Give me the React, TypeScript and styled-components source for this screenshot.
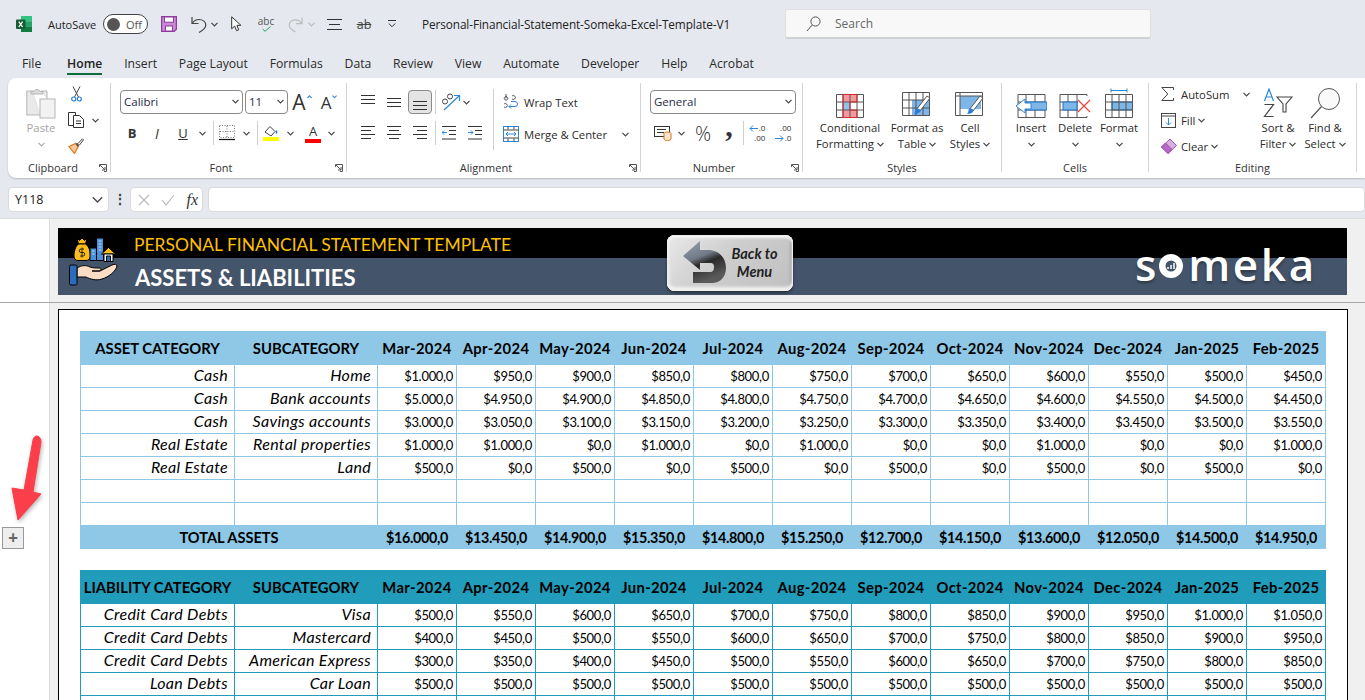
import React from "react";
import styled, { createGlobalStyle } from "styled-components";

const UI = "'Open Sans', 'Noto Sans', sans-serif";
const CELL = "Lato, 'Liberation Sans', sans-serif";

const Global = createGlobalStyle`
  html, body { margin: 0; padding: 0; background: #e5e8ee; }
  body { font-family: ${UI}; color: #222; }
`;

const Page = styled.div`
  width: 1365px;
  height: 700px;
  overflow: hidden;
  position: relative;
  background: #e5e8ee;
  display: flex;
  flex-direction: column;
`;

/* ---------- shared bits ---------- */

const Tool = styled.span<{ $w: number; $ml?: number; $down?: boolean }>`
  flex: none;
  display: inline-flex;
  align-items: center;
  justify-content: center;
  width: ${({ $w }) => $w}px;
  height: 24px;
  margin-left: ${({ $ml }) => $ml ?? 0}px;
  box-sizing: border-box;
  ${({ $down }) => ($down ? "background: #e4e4e4; border: 1px solid #8a8a8a; border-radius: 4px;" : "")}
`;

const VSep = styled.span<{ $ml: number; $h?: number }>`
  flex: none;
  width: 1px;
  height: ${({ $h }) => $h ?? 24}px;
  margin-left: ${({ $ml }) => $ml}px;
  background: #cfcfcf;
`;

const Chev = ({ c = "#444", w = 7 }: { c?: string; w?: number }) => (
  <svg width={w} height={(w * 5) / 7} viewBox="0 0 7 5" fill="none">
    <path d="M.5 .8 3.5 3.8 6.500 .8" stroke={c} strokeWidth={7 / w + 0.2} />
  </svg>
);

/* ---------- title bar ---------- */

const TitleBar = styled.div`
  height: 48px;
  display: flex;
  align-items: center;
  padding-left: 16px;
  font-size: 11.5px;
  color: #222;
`;

const Toggle = styled.span`
  flex: none;
  margin-left: 7px;
  width: 45px;
  height: 20px;
  box-sizing: border-box;
  border: 1px solid #444;
  border-radius: 10px;
  background: #fff;
  display: flex;
  align-items: center;
  padding: 0 5px 0 3px;
  justify-content: space-between;
  font-size: 11px;
  color: #555;
  &::before {
    content: "";
    width: 13px;
    height: 13px;
    border-radius: 50%;
    background: #555;
  }
`;

const AutoSaveText = styled.span`
  flex: none;
  width: 48px;
  margin-left: 16px;
  white-space: nowrap;
  font-size: 11px;
`;

const FileName = styled.span`
  flex: none;
  width: 340px;
  margin-left: 26px;
  white-space: nowrap;
  font-size: 11.8px;
  letter-spacing: -0.1px;
`;

const SearchBox = styled.div`
  flex: none;
  width: 366px;
  height: 30px;
  margin-left: 23px;
  box-sizing: border-box;
  background: #f8f8f8;
  border: 1px solid #e0e0e0;
  border-bottom: 2px solid #cfd1d4;
  border-radius: 3px;
  display: flex;
  align-items: center;
  gap: 14px;
  padding-left: 20px;
  font-size: 12px;
  color: #666;
`;

const AbcText = styled.span`
  display: flex;
  flex-direction: column;
  align-items: center;
  font-size: 10px;
  line-height: 10px;
  color: #555;
`;

const StruckText = styled.span`
  font-size: 12.5px;
  color: #444;
  text-decoration: line-through;
`;

const ExcelIcon = () => (
  <svg width="16" height="16" viewBox="0 0 16 16">
    <rect x="5" y="0" width="11" height="5.4" fill="#33c481" />
    <rect x="5" y="5.3" width="11" height="5.4" fill="#21a366" />
    <rect x="5" y="10.6" width="11" height="5.4" fill="#107c41" />
    <rect x="0" y="3.5" width="9.5" height="9.5" rx="1" fill="#185c37" />
    <path d="M2.8 5.6 6.6 11M6.6 5.6 2.8 11" stroke="#fff" strokeWidth="1.3" />
  </svg>
);

const SaveIcon = () => (
  <svg width="16" height="16" viewBox="0 0 16 16">
    <path d="M.6.6h14.8v12.6l-2.2 2.2H.6z" fill="#c98ad3" stroke="#8e3b9b" strokeWidth="1.2" />
    <rect x="3.5" y="1" width="9" height="5.2" fill="#fff" stroke="#8e3b9b" />
    <rect x="4.5" y="10" width="7" height="5" fill="#fff" stroke="#8e3b9b" />
  </svg>
);

const UndoIcon = ({ c = "#444" }: { c?: string }) => (
  <svg width="16" height="17" viewBox="0 0 16 17" fill="none" stroke={c} strokeWidth="1.2">
    <path d="M1 1v6.5h6.5" />
    <path d="M1.3 7.3C3 4.5 5 3.5 8 3.5c4 0 6.8 2.5 6.8 5.5 0 2.5-1.5 4.5-6.8 7.5" />
  </svg>
);

const RedoIcon = () => (
  <svg width="15" height="17" viewBox="0 0 16 17" fill="none" stroke="#bbb" strokeWidth="1.2">
    <path d="M15 1v6.5H8.5" />
    <path d="M14.7 7.3C13 4.5 11 3.5 8 3.5 4 3.5 1.2 6 1.2 9c0 2.5 1.5 4.5 6.8 7.5" />
  </svg>
);

const CursorIcon = () => (
  <svg width="11" height="16" viewBox="0 0 11 16" fill="#fff" stroke="#333" strokeWidth="1">
    <path d="M.7.8v12l3-2.7 1.8 4.6 2.2-.9-1.8-4.5h4z" />
  </svg>
);

const GreenCheck = () => (
  <svg width="9" height="6" viewBox="0 0 9 6" fill="none">
    <path d="M.6 3 3 5.3 8.4.6" stroke="#2a9d5c" strokeWidth="1" />
  </svg>
);

const CustomizeIcon = () => (
  <svg width="8" height="8" viewBox="0 0 8 8" fill="none" stroke="#333">
    <path d="M0 .5h8M.8 3.500 4 6.700 7.200 3.500" />
  </svg>
);

const Lines = ({ w, ys, ws, align = "l" }: { w: number; ys: number[]; ws?: number[]; align?: "l" | "c" | "r" }) => (
  <svg width={w} height="16" viewBox={`0 0 ${w} 16`} stroke="#333" strokeWidth="1">
    {ys.map((y, i) => {
      const len = ws ? ws[i] : w;
      const x = align === "l" ? 0 : align === "c" ? (w - len) / 2 : w - len;
      return <line key={i} x1={x} x2={x + len} y1={y + 0.5} y2={y + 0.5} />;
    })}
  </svg>
);

const SearchGlass = () => (
  <svg width="15" height="16" viewBox="0 0 15 16" fill="none" stroke="#555" strokeWidth="1">
    <circle cx="9.5" cy="5.5" r="4.6" />
    <path d="M6.2 9 1 15" />
  </svg>
);

/* ---------- tabs ---------- */

const TabBar = styled.div`
  height: 30px;
  display: flex;
  align-items: flex-start;
  padding-left: 22px;
  gap: 21.8px;
  font-size: 12.2px;
`;

const Tab = styled.span<{ $on?: boolean }>`
  height: 27px;
  box-sizing: border-box;
  padding-top: 7px;
  line-height: 18px;
  white-space: nowrap;
  color: #2b2b2b;
  ${({ $on }) => ($on ? "margin-left: 4px; font-weight: 600; color: #222; border-bottom: 2px solid #0e6b3a;" : "")}
`;

/* ---------- ribbon ---------- */

const Ribbon = styled.div`
  height: 100px;
  margin-left: 8px;
  background: #fff;
  border-radius: 8px 0 0 8px;
  box-shadow: 0 1px 2px rgba(0, 0, 0, 0.2);
  display: flex;
  align-items: flex-start;
  font-size: 11.3px;
  color: #2b2b2b;
`;

const Group = styled.section<{ $w: number; $pl: number }>`
  position: relative;
  flex: none;
  width: ${({ $w }) => $w}px;
  height: 89px;
  box-sizing: border-box;
  margin-top: 5px;
  padding: 3px 0 0 ${({ $pl }) => $pl}px;
  border-right: 1px solid #d4d4d4;
`;

const GroupBody = styled.div`
  height: 74px;
  display: flex;
  align-items: flex-start;
`;

const GroupLabel = styled.div`
  position: absolute;
  left: 0;
  right: 0;
  bottom: -4px;
  text-align: center;
  font-size: 11px;
  line-height: 16px;
  color: #333;
`;

const LaunchLabel = styled(GroupLabel)`
  padding-right: 15px;
`;

const ClipLabel = styled(GroupLabel)`
  text-align: left;
  padding-left: 20px;
`;

const Launcher = styled.span`
  position: absolute;
  right: 3px;
  bottom: 0;
  display: flex;
`;

const Stack = styled.div<{ $w?: number }>`
  ${({ $w }) => ($w ? `width: ${$w}px;` : "")}
  flex: none;
  padding-top: 4px;
  display: flex;
  flex-direction: column;
  gap: 7px;
`;

const Row = styled.div`
  height: 24px;
  display: flex;
  align-items: center;
`;

const SmallStack = styled.div<{ $w: number; $ml?: number }>`
  flex: none;
  width: ${({ $w }) => $w}px;
  margin-left: ${({ $ml }) => $ml ?? 0}px;
  display: flex;
  flex-direction: column;
  gap: 10px;
`;

const SmallRow = styled.div`
  height: 16px;
  display: flex;
  align-items: center;
  white-space: nowrap;
`;

const SmallIcon = styled.span<{ $w: number; $start?: boolean }>`
  flex: none;
  display: inline-flex;
  justify-content: ${({ $start }) => ($start ? "flex-start" : "center")};
  width: ${({ $w }) => $w}px;
`;

const Select = styled.div<{ $w: number; $ml?: number }>`
  flex: none;
  width: ${({ $w }) => $w}px;
  height: 24px;
  margin-left: ${({ $ml }) => $ml ?? 0}px;
  box-sizing: border-box;
  border: 1px solid #8a8a8a;
  border-radius: 4px;
  display: flex;
  align-items: center;
  justify-content: space-between;
  padding: 0 3px 2px;
  font-size: 11.5px;
  color: #1f2a44;
`;

const LargeBtn = styled.div<{ $w: number; $ml?: number; $faint?: boolean }>`
  flex: none;
  width: ${({ $w }) => $w}px;
  margin-left: ${({ $ml }) => $ml ?? 0}px;
  display: flex;
  flex-direction: column;
  align-items: center;
  text-align: center;
  line-height: 16px;
  white-space: nowrap;
  color: ${({ $faint }) => ($faint ? "#a5a5a5" : "#2b2b2b")};
`;

const IconSlot = styled.div`
  height: 34px;
  display: flex;
  align-items: center;
  justify-content: center;
`;

const Line2 = styled.span`
  display: inline-flex;
  align-items: center;
  gap: 3px;
  height: 16px;
`;

const TallSep = styled.span`
  flex: none;
  width: 1px;
  height: 61px;
  margin-top: 3px;
  background: #cfcfcf;
`;

const WrapStack = styled.div`
  flex: none;
  padding: 5px 0 0 9px;
  display: flex;
  flex-direction: column;
  gap: 10px;
`;

const WrapRow = styled.div`
  height: 22px;
  display: flex;
  align-items: center;
  gap: 5px;
  white-space: nowrap;
`;

const FontA = styled.span<{ $size: number }>`
  font-size: ${({ $size }) => $size}px;
  line-height: 1;
  color: #333;
`;

const Caret = styled.span`
  display: flex;
  margin: -10px 0 0 1px;
`;

const CaretUp = styled(Caret)`
  transform: rotate(180deg);
`;

const Bold = styled.span`
  font-weight: 700;
  font-size: 13px;
  color: #333;
`;

const Ital = styled.span`
  font-style: italic;
  font-size: 14px;
  color: #333;
`;

const Under = styled.span`
  text-decoration: underline;
  font-size: 13px;
  color: #333;
`;

const ColorA = styled.span<{ $bar: string }>`
  width: 16px;
  text-align: center;
  font-size: 13px;
  line-height: 15px;
  border-bottom: 4px solid ${({ $bar }) => $bar};
  color: #333;
`;

const Percent = styled.span`
  font-size: 20px;
  font-weight: 300;
  color: #333;
`;

const Comma = styled.span`
  font-family: 'Liberation Serif', serif;
  font-weight: 700;
  font-size: 30px;
  line-height: 10px;
  margin-top: -15px;
  color: #333;
`;

const DecimalPair = styled.span`
  display: flex;
  flex-direction: column;
  font-size: 8px;
  line-height: 10px;
  color: #333;
`;

const DecimalRow = styled.span`
  display: flex;
  align-items: center;
  justify-content: flex-end;
  gap: 1px;
`;

const ArrowLeft = () => (
  <svg width="9" height="7" viewBox="0 0 9 7" fill="none" stroke="#2b88d8"><path d="M9 3.500H1M4 .5l-3 3 3 3" /></svg>
);

const ArrowRight = () => (
  <svg width="9" height="7" viewBox="0 0 9 7" fill="none" stroke="#2b88d8"><path d="M0 3.500h8M5 .5l3 3-3 3" /></svg>
);

const Launch = () => (
  <svg width="8" height="8" viewBox="0 0 8 8" fill="none" stroke="#555" strokeWidth="1">
    <path d="M.5 3V.5h7v7H5" />
    <path d="M1 1l5 5M3 6h3V3" />
  </svg>
);

const PasteIcon = () => (
  <svg width="30" height="31" viewBox="0 0 30 31" fill="none" stroke="#b5b5b5" strokeWidth="1">
    <path d="M7 3H.8v24H15" fill="#e9e9e9" />
    <path d="M15 3h6v8" fill="#e9e9e9" />
    <path d="M5 6V3.5h3C8 1 14 1 14 3.5h3V6z" fill="#ddd" />
    <rect x="14" y="11" width="15" height="19" fill="#f2f2f2" />
  </svg>
);

const CutIcon = () => (
  <svg width="11" height="16" viewBox="0 0 11 16" fill="none">
    <path d="M2 .5 7.5 11M9 .5 3.5 11" stroke="#444" strokeWidth="1" />
    <circle cx="2.7" cy="13" r="2" stroke="#2b7cd3" strokeWidth="1.2" />
    <circle cx="8.3" cy="13" r="2" stroke="#2b7cd3" strokeWidth="1.2" />
  </svg>
);

const CopyIcon = () => (
  <svg width="16" height="16" viewBox="0 0 16 16" fill="#fff" stroke="#333" strokeWidth="1">
    <path d="M.5.5h7v13h-7z" />
    <path d="M5.5 3.5h6l4 4v8h-10z" />
    <path d="M8 9h5M8 11.500h5" />
  </svg>
);

const BrushIcon = () => (
  <svg width="16" height="16" viewBox="0 0 16 16" fill="none">
    <path d="M1 8.500 7.500 5.500 10 9l-3.500 6.500z" fill="#f6c89a" stroke="#d9771c" strokeWidth="1.2" />
    <path d="M7.500 5.500 9 7.500 10 9l1.500-1.500-2-2.500z" fill="#555" />
    <path d="M10 5.500 14.500.8l1 1-4 5.200" stroke="#444" strokeWidth="1" />
  </svg>
);

const BorderIcon = () => (
  <svg width="16" height="16" viewBox="0 0 16 16" fill="none">
    <rect x=".5" y=".5" width="15" height="12" stroke="#777" strokeDasharray="1 1.500" />
    <path d="M8 1v12M1 6.500h14" stroke="#777" strokeDasharray="1 1.500" />
    <path d="M0 14.500h16" stroke="#111" strokeWidth="1.200" />
  </svg>
);

const FillIcon = () => (
  <svg width="16" height="16" viewBox="0 0 16 16" fill="none">
    <path d="M2 7 7 1.500l5 5L8 11z" fill="#fff" stroke="#444" />
    <path d="M13.500 5.500v3" stroke="#2b7cd3" strokeWidth="1.600" />
    <rect x="0" y="12" width="16" height="4" fill="#ffff00" />
  </svg>
);

const OrientIcon = () => (
  <svg width="20" height="18" viewBox="0 0 20 18" fill="none">
    <path d="M3 17 18 3M13 2.500h5.500V8" stroke="#2b88d8" strokeWidth="1.200" />
    <circle cx="4" cy="8.500" r="2.500" stroke="#444" />
    <circle cx="9" cy="3.500" r="2.500" stroke="#444" />
  </svg>
);

const IndentIcon = ({ flip }: { flip?: boolean }) => (
  <svg width="14" height="14" viewBox="0 0 14 14" fill="none">
    <path d="M0 .5h14M7 4.500h7M7 8.500h7M0 13h14" stroke="#333" />
    <path d={flip ? "M0 6.500h5M3 4.500l2 2-2 2" : "M0 6.500h5M2 4.500l-2 2 2 2"} stroke="#2b88d8" />
  </svg>
);

const WrapIcon = () => (
  <svg width="16" height="18" viewBox="0 0 16 18" fill="none">
    <path d="M6 13.500h6a2.500 2.500 0 0 0 0-5H8M8 11.500l-2 2 2 2" stroke="#2b88d8" strokeWidth="1" />
    <path d="M3 5.500V1M3 3.500a1.800 1.800 0 1 0 .1 0M9 3a2 2 0 1 1 0 3M1 11a2 2 0 1 1 0 3" stroke="#444" strokeWidth=".9" />
  </svg>
);

const MergeIcon = () => (
  <svg width="16" height="16" viewBox="0 0 16 16" fill="none">
    <rect x=".5" y=".5" width="15" height="15" stroke="#2b88d8" />
    <path d="M5 .5v3M11 .5v3M5 12.500v3M11 12.500v3M.5 4h15M.5 12h15" stroke="#444" />
    <path d="M3 8h10M5 6 3 8l2 2M11 6l2 2-2 2" stroke="#2b88d8" />
  </svg>
);

const CurrencyIcon = () => (
  <svg width="18" height="15" viewBox="0 0 18 15" fill="none">
    <rect x=".5" y=".5" width="15" height="10" fill="#fff" stroke="#333" />
    <path d="M3 3.500h9M3 6.500h7" stroke="#333" />
    <ellipse cx="13.500" cy="7.500" rx="3.500" ry="1.500" fill="#f6e3d0" stroke="#d9771c" />
    <path d="M10 7.500v5.500c0 2 7 2 7 0V7.500" fill="#f6e3d0" stroke="#d9771c" />
  </svg>
);

const Grid = ({ w = 28, h = 24, children }: { w?: number; h?: number; children?: React.ReactNode }) => (
  <svg width={w} height={h + 6} viewBox={`0 -6 ${w} ${h + 6}`} fill="none">
    {children}
  </svg>
);

const gridLines = "M.5.500h27v23H.5zM.5 8h27M.5 16h27M7 .5v23M14 .5v23M21 .5v23";

const CondIcon = () => (
  <Grid>
    <rect x="7" y="0" width="14" height="8" fill="#f4979e" />
    <rect x="7" y="8" width="7" height="8" fill="#8ec3ea" />
    <rect x="7" y="16" width="14" height="8" fill="#f4979e" />
    <path d={gridLines} stroke="#555" />
    <path d="M7 .5h14v7.500H14v8h7v7.500H7z" stroke="#d62b2b" />
  </Grid>
);

const Brush = ({ x, y }: { x: number; y: number }) => (
  <g transform={`translate(${x} ${y})`}>
    <path d="M2 16 13 2l3 2L6 17z" fill="#fff" stroke="#555" />
    <path d="M0 20c3 0 6-1 7-4l-4-2c-2 1-1 4-3 6z" fill="#2b7cd3" />
  </g>
);

const TableStyleIcon = () => (
  <svg width="30" height="30" viewBox="0 -4 30 30" fill="none">
    <rect x="10" y="8" width="18" height="16" fill="#7fb6e8" />
    <path d={gridLines} stroke="#555" />
    <Brush x={12} y={2} />
  </svg>
);

const CellStyleIcon = () => (
  <svg width="30" height="30" viewBox="0 -4 30 30" fill="none">
    <rect x="5" y="4" width="21" height="13" fill="#7fb6e8" />
    <path d="M.5.500h27v23H.5zM.5 4h27M5 .5v23" stroke="#555" />
    <Brush x={12} y={2} />
  </svg>
);

const InsertIcon = () => (
  <svg width="32" height="30" viewBox="0 -6 32 30" fill="none">
    <path d="M3 .5h27v23H3zM3 8h27M3 16h27M11 .5v23M20 .5v23" stroke="#555" />
    <rect x="11" y="8" width="21" height="8" fill="#7fb6e8" stroke="#1a73c7" />
    <path d="M10 5 1 12l9 7v-4h6V9h-6z" fill="#fff" stroke="#2b88d8" />
  </svg>
);

const DeleteIcon = () => (
  <svg width="32" height="30" viewBox="0 -6 32 30" fill="none">
    <path d="M1 .5h27v23H1zM1 8h27M1 16h27M9 .5v23M18 .5v23" stroke="#555" />
    <rect x="4" y="8" width="14" height="8" fill="#7fb6e8" stroke="#1a73c7" />
    <rect x="19" y="2" width="12" height="20" fill="#fff" />
    <path d="M19 6l12 12M31 6 19 18" stroke="#f0423c" strokeWidth="1.200" />
  </svg>
);

const FormatIcon = () => (
  <svg width="28" height="30" viewBox="0 -6 28 30" fill="none">
    <rect x="7" y="8" width="21" height="8" fill="#7fb6e8" stroke="#1a73c7" />
    <path d={gridLines} stroke="#555" />
    <path d="M6-3.500h16M6-5.500v4M22-5.500v4" stroke="#2b88d8" />
  </svg>
);

const SigmaIcon = () => (
  <svg width="13" height="14" viewBox="0 0 13 14" fill="none" stroke="#444" strokeWidth="1">
    <path d="M12.500 3V.5H.8l6 6.500-6 6.500h11.700V11" />
  </svg>
);

const FillDown = () => (
  <svg width="15" height="15" viewBox="0 0 15 15" fill="none">
    <rect x=".5" y=".5" width="14" height="14" stroke="#444" />
    <path d="M.5 3h14" stroke="#444" />
    <path d="M7.500 5v7M5 9.500l2.500 2.500L10 9.500" stroke="#2b88d8" />
  </svg>
);

const Eraser = () => (
  <svg width="16" height="16" viewBox="0 0 16 16">
    <path d="M9 1l6.500 6.500L7 15.500.5 9z" fill="#d9b3e0" stroke="#9c4fb0" />
    <path d="M.5 9 4.500 5 11 11.500 7 15.500z" fill="#b668c7" stroke="#9c4fb0" />
  </svg>
);

const SortIcon = () => (
  <svg width="30" height="30" viewBox="0 0 30 30" fill="none">
    <path d="M1.500 13 6 1l4.500 12M3 9h6" stroke="#2b88d8" strokeWidth="1.200" />
    <path d="M1.500 16.500h9l-9 12h9" stroke="#444" strokeWidth="1.200" />
    <path d="M14 9h15l-6 7v8h-3v-8z" stroke="#444" strokeWidth="1.100" />
  </svg>
);

const FindIcon = () => (
  <svg width="30" height="31" viewBox="0 0 30 31" fill="none">
    <circle cx="19" cy="11" r="10.500" fill="#fafafa" stroke="#555" />
    <path d="M11.500 18.500 1 30" stroke="#555" strokeWidth="1.200" />
  </svg>
);

/* ---------- formula bar ---------- */

const FormulaBar = styled.div`
  height: 41px;
  box-sizing: border-box;
  padding: 9px 0 0 8px;
  display: flex;
  align-items: flex-start;
  border-bottom: 1px solid #dcdcdc;
`;

const FBox = styled.div<{ $w?: number }>`
  ${({ $w }) => ($w ? `width: ${$w}px; flex: none;` : "flex: 1;")}
  height: 25px;
  box-sizing: border-box;
  background: #fff;
  border: 1px solid #dadada;
  border-radius: 4px;
  display: flex;
  align-items: center;
  font-size: 12.5px;
  color: #222;
`;

const NameBox = styled(FBox)`
  justify-content: space-between;
  padding: 0 5px 0 6px;
`;

const FxBox = styled(FBox)`
  justify-content: space-between;
  padding: 0 4px 0 7px;
  margin-right: 5px;
`;

const Dots = styled.span`
  width: 21px;
  flex: none;
  text-align: center;
  font-weight: 700;
  line-height: 24px;
  font-size: 14px;
  color: #444;
`;

const Fx = styled.span`
  font-family: 'Liberation Serif', serif;
  font-style: italic;
  font-size: 16px;
  color: #333;
`;

/* ---------- sheet ---------- */

const Frozen = styled.div`
  height: 84px;
  flex: none;
  box-sizing: border-box;
  display: flex;
  border-bottom: 1px solid #a6a6a6;
`;

const Gutter = styled.div`
  flex: none;
  width: 49px;
  background: #fff;
  border-right: 1px solid #dcdcdc;
`;

const FrozenPane = styled.div`
  flex: 1;
  background: #f0f0f0;
  padding: 9px 0 0 8px;
`;

const Banner = styled.div`
  position: relative;
  width: 1289px;
  height: 67px;
  display: grid;
  grid-template-rows: 30px 37px;
  background: #44546a;
`;

const BannerTop = styled.div`
  background: #000;
  padding-left: 76px;
  font-family: ${CELL};
  font-size: 17.45px;
  line-height: 33px;
  color: #ffc000;
  white-space: nowrap;
`;

const BannerTitle = styled.div`
  padding-left: 77px;
  font-family: ${CELL};
  font-weight: 700;
  font-size: 22px;
  line-height: 40px;
  color: #fff;
  white-space: nowrap;
`;

const LogoSpot = styled.span`
  position: absolute;
  left: 10px;
  top: 9px;
  display: flex;
`;

const BackButton = styled.div`
  position: absolute;
  left: 609px;
  top: 7px;
  width: 126px;
  height: 56px;
  box-sizing: border-box;
  border-radius: 8px;
  padding-left: 15px;
  display: flex;
  align-items: center;
  background: linear-gradient(135deg, #e9e9e9 0%, #cdcdcd 45%, #c0c0c0 100%);
  box-shadow: inset 0 0 0 1px #eee, inset 0 3px 3px #f6f6f6, inset 0 -4px 3px #f2f2f2,
    inset 3px 0 3px #e8e8e8, inset -3px 0 3px #a9a9a9, 0 2px 3px rgba(0, 0, 0, 0.45);
`;

const BackText = styled.span`
  flex: 1;
  text-align: center;
  font-family: ${CELL};
  font-style: italic;
  font-weight: 700;
  font-size: 14.5px;
  line-height: 18px;
  color: #222;
  padding: 0 12px 0 0;
`;

const Someka = styled.div`
  position: absolute;
  left: 1077px;
  top: 12px;
  display: flex;
  align-items: baseline;
  font-family: ${UI};
  font-weight: 600;
  font-size: 44px;
  line-height: 48px;
  letter-spacing: 2.7px;
  color: #fff;
  text-shadow: 0 2px 3px rgba(0, 0, 0, 0.35);
`;

const SomekaDisc = styled.span`
  align-self: flex-end;
  margin: 0 5px 10px 0;
  display: flex;
`;

const Work = styled.div`
  flex: 1;
  display: flex;
  min-height: 0;
`;

const PlusCol = styled(Gutter)`
  padding: 224px 0 0 2px;
  box-sizing: content-box;
  width: 47px;
`;

const PlusBtn = styled.div`
  width: 22px;
  height: 22px;
  box-sizing: border-box;
  border: 1px solid #999;
  background: #eee;
  text-align: center;
  font-size: 17px;
  font-weight: 700;
  line-height: 19px;
  color: #666;
`;

const ArrowSpot = styled.span`
  position: absolute;
  left: 8px;
  top: 432px;
  display: flex;
  filter: drop-shadow(1px 2px 2px rgba(0, 0, 0, 0.3));
`;

const WorkPane = styled.div`
  flex: 1;
  background: #f0f0f0;
  padding: 6px 0 0 8px;
`;

const SheetFrame = styled.div`
  width: 1290px;
  height: 500px;
  box-sizing: border-box;
  background: #fff;
  border: 1px solid #000;
  padding: 21px 0 0 21px;
  display: flex;
  flex-direction: column;
  gap: 21px;
`;

const Table = styled.table<{ $c: string }>`
  --accent: ${({ $c }) => $c};
  flex: none;
  width: 1246px;
  table-layout: fixed;
  border-collapse: collapse;
  font-family: ${CELL};
  font-size: 13px;
  letter-spacing: -0.3px;
  color: #000;
`;

const Head = styled.th`
  height: 32px;
  padding: 0;
  background: var(--accent);
  font-size: 14.8px;
  letter-spacing: 0;
  font-weight: 700;
  text-align: center;
  white-space: nowrap;
  border: 1px solid var(--accent);
`;

const MonthHead = styled(Head)`
  letter-spacing: 0.35px;
`;

const Cell = styled.td`
  height: 23px;
  box-sizing: border-box;
  padding: 0 3px 0 0;
  line-height: 20px;
  text-align: right;
  white-space: nowrap;
  border: 1px solid var(--accent);
`;

const TextCell = styled(Cell)`
  padding: 0 6px 2px 0;
  line-height: 18px;
  font-style: italic;
  font-size: 16px;
  font-weight: 400;
  letter-spacing: 0.3px;
`;

const Total = styled.td`
  height: 22px;
  padding: 0 8px 0 0;
  background: var(--accent);
  border: 1px solid var(--accent);
  font-weight: 700;
  font-size: 14.3px;
  text-align: right;
  white-space: nowrap;
`;

const TotalName = styled(Total)`
  text-align: center;
  padding: 0;
  font-size: 14.6px;
  letter-spacing: 0;
`;

const Col = styled.col<{ $w: number }>`
  width: ${({ $w }) => $w}px;
`;

const MONTHS = ["Mar-2024", "Apr-2024", "May-2024", "Jun-2024", "Jul-2024", "Aug-2024", "Sep-2024", "Oct-2024", "Nov-2024", "Dec-2024", "Jan-2025", "Feb-2025"];

const money = (n: number) => {
  const s = String(n).replace(/\B(?=(\d{3})+$)/g, ".");
  return `$${s},0`;
};

const step = (from: number, by: number) => MONTHS.map((_, i) => from + by * i);

type Line = { cat: string; sub: string; vals: number[] };

const ASSETS: Line[] = [
  { cat: "Cash", sub: "Home", vals: step(1000, -50) },
  { cat: "Cash", sub: "Bank accounts", vals: step(5000, -50) },
  { cat: "Cash", sub: "Savings accounts", vals: step(3000, 50) },
  { cat: "Real Estate", sub: "Rental properties", vals: [1000, 1000, 0, 1000, 0, 1000, 0, 0, 1000, 0, 0, 1000] },
  { cat: "Real Estate", sub: "Land", vals: [500, 0, 500, 0, 500, 0, 500, 0, 500, 0, 500, 0] },
];

const ASSET_TOTALS = [16000, 13450, 14900, 15350, 14800, 15250, 12700, 14150, 13600, 12050, 14500, 14950];

const DEBTS: Line[] = [
  { cat: "Credit Card Debts", sub: "Visa", vals: step(500, 50) },
  { cat: "Credit Card Debts", sub: "Mastercard", vals: step(400, 50) },
  { cat: "Credit Card Debts", sub: "American Express", vals: step(300, 50) },
  { cat: "Loan Debts", sub: "Car Loan", vals: step(500, 0) },
];

const TableHead = ({ first }: { first: string }) => (
  <>
    <colgroup>
      <Col $w={154} />
      <Col $w={143} />
      {MONTHS.map((m) => (
        <Col key={m} $w={79} />
      ))}
    </colgroup>
    <thead>
      <tr>
        <Head>{first}</Head>
        <Head>SUBCATEGORY</Head>
        {MONTHS.map((m) => (
          <MonthHead key={m}>{m}</MonthHead>
        ))}
      </tr>
    </thead>
  </>
);

const DataRow = ({ line }: { line: Line }) => (
  <tr>
    <TextCell>{line.cat}</TextCell>
    <TextCell>{line.sub}</TextCell>
    {line.vals.map((v, i) => (
      <Cell key={i}>{money(v)}</Cell>
    ))}
  </tr>
);

const BlankRow = () => (
  <tr>
    <Cell />
    <Cell />
    {MONTHS.map((m) => (
      <Cell key={m} />
    ))}
  </tr>
);

const HandLogo = () => (
  <svg width="50" height="50" viewBox="0 0 50 50" stroke="#000" strokeWidth="1" strokeLinejoin="round">
    <path d="M9 1l2.500 2.500L14 1l2.500 2.500L19 1l-1.500 6h-7z" fill="#fdbb1c" />
    <path d="M10.500 7h7c4 3 5 8 5 12 0 3-2 4.500-4.500 4.500h-8C7.500 23.500 6 22 6 19c0-4 1-9 4.500-12z" fill="#fdbb1c" />
    <path d="M16 12h-3a1.500 1.500 0 0 0 0 3.500h2a1.500 1.500 0 0 1 0 3.500h-3M14 10.500v10" fill="none" stroke="#222" />
    <rect x="22" y="11" width="6.500" height="12.500" fill="#4a90d9" />
    <rect x="28.500" y="1" width="7" height="22.500" fill="#4a90d9" />
    <path d="M30.500 4h3M30.500 7h3M30.500 10h3M30.500 13h3M24 14h2.500M24 17h2.500" stroke="#bcd8f2" fill="none" />
    <path d="M33.500 17l7-6.500 7 6.500z" fill="#fdbb1c" />
    <rect x="36" y="17" width="9" height="7.500" fill="#fff" />
    <rect x="38.500" y="19" width="4" height="5.500" fill="#2a6ebb" />
    <path d="M9 31c5-3 9-3 13-1 3 1 6 1 9 1 2 0 3 3 0 3h-7 8l12-6c3-1 5-1 5 1-1 5-8 11-15 13-6 2-12 0-16-2H9z" fill="#fbdcc4" />
    <rect x="1.500" y="28" width="7.500" height="20" rx="1.500" fill="#2a6ebb" />
  </svg>
);

const BackArrow = () => (
  <svg width="46" height="48" viewBox="0 0 46 48">
    <defs>
      <linearGradient id="backShade" x1="0" y1="0" x2="0.4" y2="1">
        <stop offset="0" stopColor="#98a2b0" />
        <stop offset="0.45" stopColor="#727a87" />
        <stop offset="0.62" stopColor="#2a2a2a" />
        <stop offset="1" stopColor="#5a5a5a" />
      </linearGradient>
    </defs>
    <path d="M1 17 18 2v9h8c12 0 18 9 18 18s-6 15-14 15H11V33h17c3 0 4-2 4-5s-1-4-4-4H18v7z" fill="url(#backShade)" />
  </svg>
);

const RedArrow = () => (
  <svg width="36" height="92" viewBox="0 0 36 92">
    <path d="M25 8 16 58 4 56 10 88 33 62 25 60 33 10c0-7-7-8-8-2z" fill="#fc3d4a" stroke="#fc3d4a" strokeLinejoin="round" />
  </svg>
);

const App = () => (
  <Page>
    <Global />

    <TitleBar>
      <ExcelIcon />
      <AutoSaveText>AutoSave</AutoSaveText>
      <Toggle>Off</Toggle>
      <Tool $w={16} $ml={13}><SaveIcon /></Tool>
      <Tool $w={18} $ml={13}><UndoIcon /></Tool>
      <Tool $w={7} $ml={3}><Chev /></Tool>
      <Tool $w={11} $ml={13}><CursorIcon /></Tool>
      <Tool $w={14} $ml={17}><AbcText>abc<GreenCheck /></AbcText></Tool>
      <Tool $w={15} $ml={15}><RedoIcon /></Tool>
      <Tool $w={7} $ml={5}><Chev c="#bbb" /></Tool>
      <Tool $w={15} $ml={12}><Lines w={15} ys={[3, 8, 13]} ws={[15, 11, 15]} align="c" /></Tool>
      <Tool $w={16} $ml={14}><StruckText>ab</StruckText></Tool>
      <Tool $w={8} $ml={16}><CustomizeIcon /></Tool>
      <FileName>Personal-Financial-Statement-Someka-Excel-Template-V1</FileName>
      <SearchBox>
        <SearchGlass />
        Search
      </SearchBox>
    </TitleBar>

    <TabBar>
      <Tab>File</Tab>
      <Tab $on>Home</Tab>
      <Tab>Insert</Tab>
      <Tab>Page Layout</Tab>
      <Tab>Formulas</Tab>
      <Tab>Data</Tab>
      <Tab>Review</Tab>
      <Tab>View</Tab>
      <Tab>Automate</Tab>
      <Tab>Developer</Tab>
      <Tab>Help</Tab>
      <Tab>Acrobat</Tab>
    </TabBar>

    <Ribbon>
      <Group $w={103} $pl={12}>
        <GroupBody>
          <LargeBtn $w={42} $faint>
            <IconSlot><PasteIcon /></IconSlot>
            Paste
            <Line2><Chev c="#aaa" /></Line2>
          </LargeBtn>
          <SmallStack $w={40} $ml={4}>
            <SmallRow><SmallIcon $w={20}><CutIcon /></SmallIcon></SmallRow>
            <SmallRow><SmallIcon $w={20}><CopyIcon /></SmallIcon><Tool $w={9} $ml={5}><Chev /></Tool></SmallRow>
            <SmallRow><SmallIcon $w={20}><BrushIcon /></SmallIcon></SmallRow>
          </SmallStack>
        </GroupBody>
        <ClipLabel>Clipboard</ClipLabel>
        <Launcher><Launch /></Launcher>
      </Group>

      <Group $w={236} $pl={9}>
        <GroupBody>
          <Stack>
            <Row>
              <Select $w={123}>Calibri<Chev /></Select>
              <Select $w={43} $ml={2}>11<Chev /></Select>
              <Tool $w={28}><FontA $size={21}>A</FontA><CaretUp><Chev c="#3a8fd6" w={5} /></CaretUp></Tool>
              <Tool $w={26}><FontA $size={17}>A</FontA><Caret><Chev c="#3a8fd6" w={5} /></Caret></Tool>
            </Row>
            <Row>
              <Tool $w={24}><Bold>B</Bold></Tool>
              <Tool $w={26}><Ital>I</Ital></Tool>
              <Tool $w={26}><Under>U</Under></Tool>
              <Tool $w={12}><Chev /></Tool>
              <VSep $ml={5} />
              <Tool $w={26}><BorderIcon /></Tool>
              <Tool $w={12}><Chev /></Tool>
              <VSep $ml={5} />
              <Tool $w={26}><FillIcon /></Tool>
              <Tool $w={12}><Chev /></Tool>
              <Tool $w={24} $ml={5}><ColorA $bar="#ff0000">A</ColorA></Tool>
              <Tool $w={12}><Chev /></Tool>
            </Row>
          </Stack>
        </GroupBody>
        <LaunchLabel>Font</LaunchLabel>
        <Launcher><Launch /></Launcher>
      </Group>

      <Group $w={294} $pl={8}>
        <GroupBody>
          <Stack $w={138}>
            <Row>
              <Tool $w={26}><Lines w={14} ys={[1, 5, 9]} /></Tool>
              <Tool $w={26}><Lines w={14} ys={[4, 8, 12]} /></Tool>
              <Tool $w={24} $ml={1} $down><Lines w={14} ys={[7, 11, 15]} /></Tool>
              <VSep $ml={3} />
              <Tool $w={24} $ml={3}><OrientIcon /></Tool>
              <Tool $w={7}><Chev /></Tool>
            </Row>
            <Row>
              <Tool $w={26}><Lines w={14} ys={[1, 5, 9, 13]} ws={[14, 10, 14, 10]} /></Tool>
              <Tool $w={26}><Lines w={14} ys={[1, 5, 9, 13]} ws={[14, 10, 14, 10]} align="c" /></Tool>
              <Tool $w={24} $ml={1}><Lines w={14} ys={[1, 5, 9, 13]} ws={[14, 10, 14, 10]} align="r" /></Tool>
              <VSep $ml={3} />
              <Tool $w={26}><IndentIcon /></Tool>
              <Tool $w={26}><IndentIcon flip /></Tool>
            </Row>
          </Stack>
          <TallSep />
          <WrapStack>
            <WrapRow><WrapIcon />Wrap Text</WrapRow>
            <WrapRow><MergeIcon />Merge &amp; Center<Tool $w={7} $ml={10}><Chev /></Tool></WrapRow>
          </WrapStack>
        </GroupBody>
        <LaunchLabel>Alignment</LaunchLabel>
        <Launcher><Launch /></Launcher>
      </Group>

      <Group $w={162} $pl={9}>
        <GroupBody>
          <Stack>
            <Row><Select $w={146}>General<Chev /></Select></Row>
            <Row>
              <Tool $w={26}><CurrencyIcon /></Tool>
              <Tool $w={10}><Chev /></Tool>
              <Tool $w={34}><Percent>%</Percent></Tool>
              <Tool $w={18}><Comma>,</Comma></Tool>
              <VSep $ml={5} />
              <Tool $w={26}>
                <DecimalPair>
                  <DecimalRow><ArrowLeft />.0</DecimalRow>
                  <DecimalRow>.00</DecimalRow>
                </DecimalPair>
              </Tool>
              <Tool $w={26}>
                <DecimalPair>
                  <DecimalRow>.00</DecimalRow>
                  <DecimalRow><ArrowRight />.0</DecimalRow>
                </DecimalPair>
              </Tool>
            </Row>
          </Stack>
        </GroupBody>
        <LaunchLabel>Number</LaunchLabel>
        <Launcher><Launch /></Launcher>
      </Group>

      <Group $w={199} $pl={13}>
        <GroupBody>
          <LargeBtn $w={68}>
            <IconSlot><CondIcon /></IconSlot>
            Conditional
            <Line2>Formatting <Chev /></Line2>
          </LargeBtn>
          <LargeBtn $w={66}>
            <IconSlot><TableStyleIcon /></IconSlot>
            Format as
            <Line2>Table <Chev /></Line2>
          </LargeBtn>
          <LargeBtn $w={40}>
            <IconSlot><CellStyleIcon /></IconSlot>
            Cell
            <Line2>Styles <Chev /></Line2>
          </LargeBtn>
        </GroupBody>
        <GroupLabel>Styles</GroupLabel>
      </Group>

      <Group $w={147} $pl={7}>
        <GroupBody>
          <LargeBtn $w={44}>
            <IconSlot><InsertIcon /></IconSlot>
            Insert
            <Line2><Chev /></Line2>
          </LargeBtn>
          <LargeBtn $w={44}>
            <IconSlot><DeleteIcon /></IconSlot>
            Delete
            <Line2><Chev /></Line2>
          </LargeBtn>
          <LargeBtn $w={44}>
            <IconSlot><FormatIcon /></IconSlot>
            Format
            <Line2><Chev /></Line2>
          </LargeBtn>
        </GroupBody>
        <GroupLabel>Cells</GroupLabel>
      </Group>

      <Group $w={208} $pl={12}>
        <GroupBody>
          <SmallStack $w={98}>
            <SmallRow><SmallIcon $w={20} $start><SigmaIcon /></SmallIcon>AutoSum<Tool $w={7} $ml={14}><Chev /></Tool></SmallRow>
            <SmallRow><SmallIcon $w={20} $start><FillDown /></SmallIcon>Fill<Tool $w={7} $ml={3}><Chev /></Tool></SmallRow>
            <SmallRow><SmallIcon $w={20} $start><Eraser /></SmallIcon>Clear<Tool $w={7} $ml={3}><Chev /></Tool></SmallRow>
          </SmallStack>
          <LargeBtn $w={38}>
            <IconSlot><SortIcon /></IconSlot>
            Sort &amp;
            <Line2>Filter <Chev /></Line2>
          </LargeBtn>
          <LargeBtn $w={42} $ml={7}>
            <IconSlot><FindIcon /></IconSlot>
            Find &amp;
            <Line2>Select <Chev /></Line2>
          </LargeBtn>
        </GroupBody>
        <GroupLabel>Editing</GroupLabel>
      </Group>
    </Ribbon>

    <FormulaBar>
      <NameBox $w={101}>Y118<Chev w={11} /></NameBox>
      <Dots>⋮</Dots>
      <FxBox $w={73}>
        <svg width="12" height="12" viewBox="0 0 12 12" stroke="#bbb" strokeWidth="1.200"><path d="M1 1l10 10M11 1 1 11" /></svg>
        <svg width="14" height="12" viewBox="0 0 14 12" fill="none" stroke="#bbb" strokeWidth="1.200"><path d="M1 6l4 5 8-10" /></svg>
        <Fx>fx</Fx>
      </FxBox>
      <FBox />
    </FormulaBar>

    <Frozen>
      <Gutter />
      <FrozenPane>
        <Banner>
          <BannerTop>PERSONAL FINANCIAL STATEMENT TEMPLATE</BannerTop>
          <BannerTitle>ASSETS &amp; LIABILITIES</BannerTitle>
          <LogoSpot><HandLogo /></LogoSpot>
          <BackButton>
            <BackArrow />
            <BackText>Back to<br />Menu</BackText>
          </BackButton>
          <Someka>
            s
            <SomekaDisc>
              <svg width="24" height="24" viewBox="0 0 24 24">
                <circle cx="12" cy="12" r="12" fill="#fff" />
                <circle cx="12" cy="12" r="5.500" fill="#44546a" />
                <path d="M9 15v-2M12 15v-4M15 15V9" stroke="#fff" strokeWidth="1.500" />
              </svg>
            </SomekaDisc>
            meka
          </Someka>
        </Banner>
      </FrozenPane>
    </Frozen>

    <Work>
      <PlusCol>
        <PlusBtn>+</PlusBtn>
      </PlusCol>
      <ArrowSpot><RedArrow /></ArrowSpot>
      <WorkPane>
        <SheetFrame>
          <Table $c="#8ec8e6">
            <TableHead first="ASSET CATEGORY" />
            <tbody>
              {ASSETS.map((l, i) => (
                <DataRow key={i} line={l} />
              ))}
              <BlankRow />
              <BlankRow />
              <tr>
                <TotalName colSpan={2}>TOTAL ASSETS</TotalName>
                {ASSET_TOTALS.map((v, i) => (
                  <Total key={i}>{money(v)}</Total>
                ))}
              </tr>
            </tbody>
          </Table>
          <Table $c="#219cbb">
            <TableHead first="LIABILITY CATEGORY" />
            <tbody>
              {DEBTS.map((l, i) => (
                <DataRow key={i} line={l} />
              ))}
              <BlankRow />
            </tbody>
          </Table>
        </SheetFrame>
      </WorkPane>
    </Work>
  </Page>
);

export default App;
